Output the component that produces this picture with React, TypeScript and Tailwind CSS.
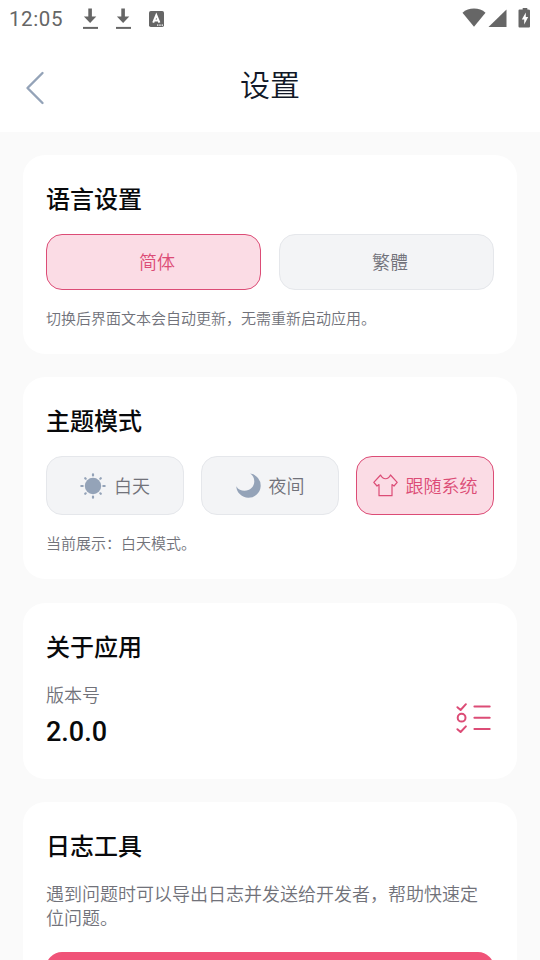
import type { ReactNode } from "react";
import clsx from "clsx";

function DownloadIcon() {
  return (
    <svg width="17" height="22" viewBox="0 0 17 22" fill="#666">
      <path d="M6.3 0.5h3.6v8h4.4L8.1 15 1.9 8.500h4.400z" />
      <path d="M1 18.900h15v2H1z" />
    </svg>
  );
}

function KeyboardIcon() {
  return (
    <svg width="15" height="16" viewBox="0 0 15 16">
      <rect width="15" height="16" rx="1.8" fill="#666" />
      <path d="M4.2 11.6 7.3 4.2l3.1 7.4M5.4 9.4h3.8" fill="none" stroke="#fff" strokeWidth="2" />
      <path d="M8 13.6h1.4v1.2H8zM10.3 13.6h1.4v1.2h-1.4zM12.6 13.6H14v1.2h-1.4z" fill="#fff" />
    </svg>
  );
}

function StatusBar() {
  return (
    <div className="flex h-[37px] items-center pl-[9px] pr-[9px] text-[#666]">
      <span className="w-[72px] pt-px font-[Roboto] text-[20.5px] leading-none tracking-[0.6px]">12:05</span>
      <div className="flex items-center pl-px">
        <DownloadIcon />
        <span className="w-4" />
        <DownloadIcon />
        <span className="w-[17px]" />
        <KeyboardIcon />
      </div>
      <svg className="ml-auto" width="70" height="22" viewBox="0 0 70 22" fill="#666">
        <path d="M1.500 4.700C7.500 -.8 18.500 -.8 24.500 4.700L13 18.700z" />
        <path d="M45.500 1.500v17.500H27.500z" />
        <path fillRule="evenodd" d="M60 1.500h1.700V0h4.600v1.500H67q2 0 2 1V18.500q0 1-1 1h-9.500q-1 0-1-1V2.500q0-1 1-1zM64.800 4.500 60.800 11.500h2.400v5l4-7.500h-2.400z" />
      </svg>
    </div>
  );
}

function SunIcon() {
  return (
    <svg width="26" height="26" viewBox="0.5 0.5 26 26" fill="none" stroke="#94a3b8" strokeWidth="2.200" strokeLinecap="round">
      <circle cx="13.500" cy="13.500" r="8.200" fill="#94a3b8" stroke="none" />
      <path d="M13.500 1.800v1.100M13.500 24.100v1.100M1.800 13.500h1.400M23.800 13.500h1.400M5.700 5.700l.5.500M20.800 20.800l.5.500M5.700 21.300l.5-.5M20.800 6.200l.5-.5" />
    </svg>
  );
}

function MoonIcon() {
  return (
    <svg width="25" height="25" viewBox="0 0 25 25" fill="#94a3b8">
      <path d="M14.200.5A12.200 12.200 0 1 1 .3 13.200C2.200 16.600 5.200 17.800 8.500 17.800C14 17.800 18.300 13.700 18.300 8.600C18.300 5 16.800 2.300 14.200.5z" />
    </svg>
  );
}

function ShirtIcon() {
  return (
    <svg width="25" height="23" viewBox="0 0 25 23" fill="none" stroke="#dc4c76" strokeWidth="1.200" strokeLinejoin="round">
      <path d="M7.600 1 .8 8.300l3.200 3.700 2-1.400v11.100h13V10.600l2 1.400 3.200-3.700L17.500 1c-2.300 5-7.600 5-9.900 0z" />
    </svg>
  );
}

function ChecklistIcon() {
  return (
    <svg className="mt-1" width="36" height="32" viewBox="0 0 36 32" fill="none" stroke="#dc4c76" strokeWidth="2" strokeLinecap="round" strokeLinejoin="round">
      <path d="M2.400 5.200 5.600 8 10.900 2.200M2.400 27.200 5.600 30l5.300-5.600M19.400 4.500h15.300M19.400 15.700h15.300M19.400 27h15.300" />
      <circle cx="6.600" cy="15.700" r="3.900" />
    </svg>
  );
}

function Card({ title, className, children }: { title: string; className?: string; children: ReactNode }) {
  return (
    <section className={clsx("rounded-[22px] bg-white px-[23px] pt-[25px]", className)}>
      <h2 className="text-2xl font-medium leading-10 text-[#08090b]">{title}</h2>
      {children}
    </section>
  );
}

function Option({ label, icon, active, className }: { label: string; icon?: ReactNode; active?: boolean; className?: string }) {
  return (
    <button
      className={clsx(
        "flex flex-1 items-center justify-center gap-2 rounded-2xl border text-lg",
        active ? "border-[#dc4c76] bg-[#fbdce5] text-[#dc4c76]" : "border-[#e5e7eb] bg-[#f3f4f6] text-[#71727a]",
        className,
      )}
    >
      {icon}
      <span className="pt-0.5 font-[350]">{label}</span>
    </button>
  );
}

export default function App() {
  return (
    <div
      lang="zh-CN"
      className="flex h-[960px] w-[540px] flex-col overflow-hidden bg-[#fafafa] font-['Roboto','Noto_Sans_CJK_SC',sans-serif] text-[#71727a]"
    >
      <header className="h-[132px] shrink-0 bg-white">
        <StatusBar />
        <div className="grid h-[95px] grid-cols-[1fr_auto_1fr] items-center px-[25px]">
          <svg className="mt-1.5" width="20" height="34" viewBox="0 0 20 34" fill="none" stroke="#94a3b8" strokeWidth="2.400" strokeLinecap="round" strokeLinejoin="round">
            <path d="M17.500 2 2.500 17 17.500 32" />
          </svg>
          <h1 className="pt-[3px] text-[30px] font-[350] leading-[44px] text-[#111827]">设置</h1>
        </div>
      </header>

      <main className="flex shrink-0 flex-col px-[23px] pt-[23px]">
        <Card title="语言设置" className="h-[199px]">
          <div className="mt-3.5 flex gap-[18px]">
            <Option label="简体" active className="h-14 pl-[7px]" />
            <Option label="繁體" className="h-14 pl-[7px]" />
          </div>
          <p className="mt-[19px] text-[15px] font-[350] leading-[21px]">切换后界面文本会自动更新，无需重新启动应用。</p>
        </Card>

        <Card title="主题模式" className="mt-[23px] h-[202px]">
          <div className="mt-3.5 flex gap-[17px]">
            <Option label="白天" icon={<SunIcon />} className="h-[59px]" />
            <Option label="夜间" icon={<MoonIcon />} className="h-[59px]" />
            <Option label="跟随系统" icon={<ShirtIcon />} active className="h-[59px]" />
          </div>
          <p className="mt-[19px] text-[15px] font-[350] leading-[21px]">当前展示：白天模式。</p>
        </Card>

        <Card title="关于应用" className="mt-6 h-[176px]">
          <div className="mt-4 flex items-center justify-between pr-[3px]">
            <div>
              <p className="text-lg font-[350] leading-6">版本号</p>
              <p className="mt-2 text-[27px] font-medium leading-8 text-[#08090b]">2.0.0</p>
            </div>
            <ChecklistIcon />
          </div>
        </Card>

        <Card title="日志工具" className="mt-[23px] h-[240px]">
          <p className="mt-4 text-lg font-[350] leading-6">遇到问题时可以导出日志并发送给开发者，帮助快速定位问题。</p>
          <button className="mt-[21px] h-14 w-full rounded-2xl bg-[#f05378]" />
        </Card>
      </main>
    </div>
  );
}
